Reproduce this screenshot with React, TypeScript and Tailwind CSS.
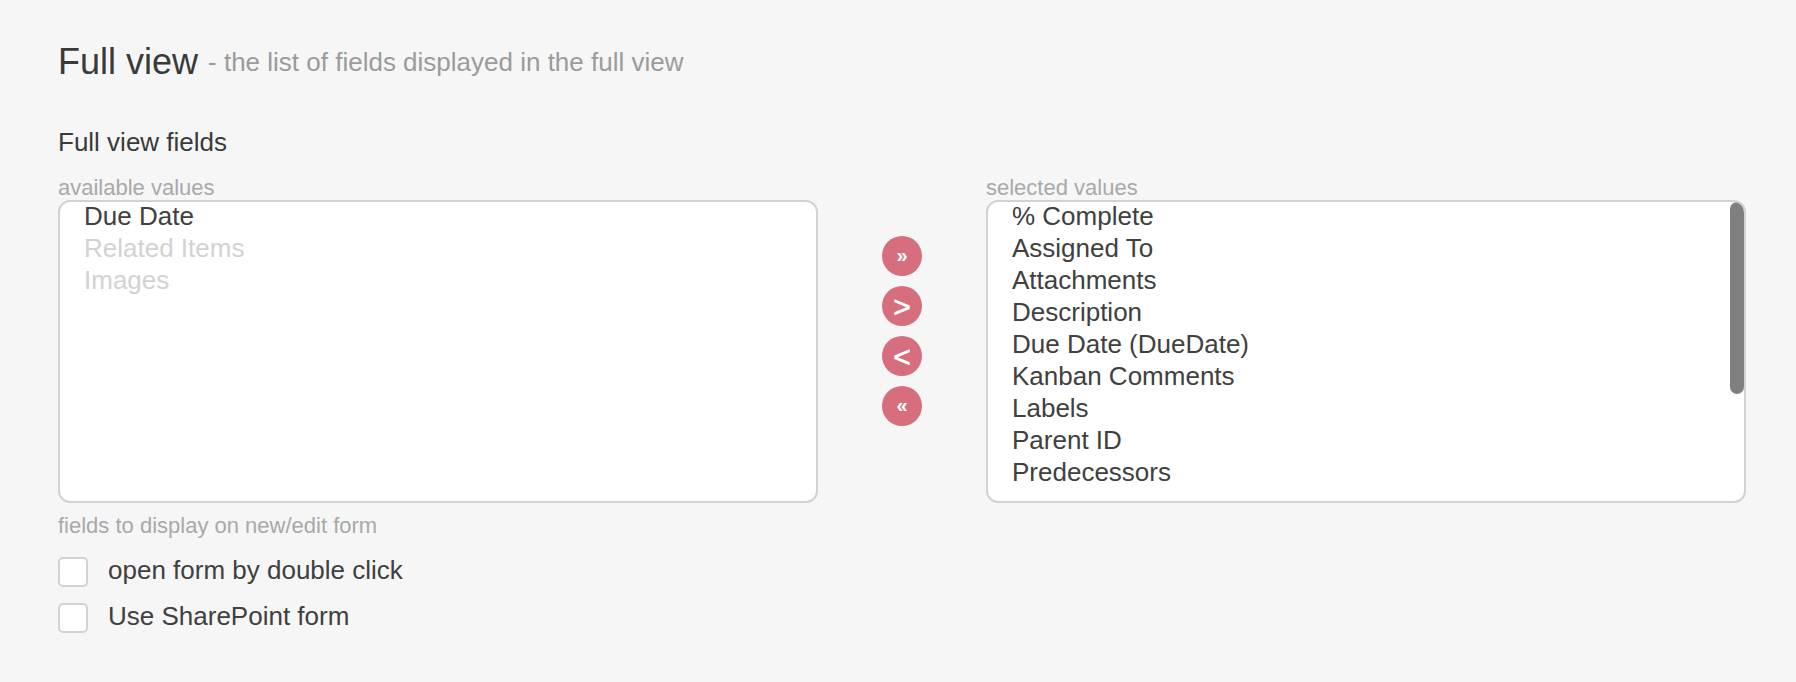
const font = "font-['Liberation_Sans',Arial,sans-serif]";

function ListBox({ items, scroll }: { items: { text: string; off?: boolean }[]; scroll?: boolean }) {
  return (
    <div className="relative h-[303px] overflow-hidden rounded-[12px] border-2 border-[#d2d2d2] bg-white pl-[24px]">
      {items.map((it) => (
        <div key={it.text} className={`h-[32px] text-[26px] leading-[29px] ${it.off ? "text-[#d2d2d2]" : "text-[#404040]"}`}>
          {it.text}
        </div>
      ))}
      {scroll && <div className="absolute right-0 top-0 h-[192px] w-[14px] rounded-[7px] bg-[#808080]" />}
    </div>
  );
}

function RoundButton({ label, big }: { label: string; big?: boolean }) {
  return (
    <div className={`flex h-[40px] w-[40px] items-center justify-center rounded-full bg-[#d66e7e] text-white ${big ? "text-[30px] leading-none pt-[1px] [-webkit-text-stroke:0.6px_white]" : "text-[20px] leading-none font-bold pb-[2px]"}`}>
      {label}
    </div>
  );
}

function Check({ label }: { label: string }) {
  return (
    <div className="flex h-[30px] items-center">
      <div className="h-[30px] w-[30px] rounded-[5px] border-2 border-[#d2d2d2] bg-white" />
      <span className="ml-[20px] pb-[4px] text-[26px] leading-[30px] text-[#404040]">{label}</span>
    </div>
  );
}

export default function App() {
  return (
    <div className={`${font} h-[682px] overflow-hidden bg-[#f6f6f6] pl-[58px] pt-[41px]`}>
      <div className="flex h-[42px] items-center">
        <span className="text-[36px] leading-[42px] text-[#3a3a3a]">Full view</span>
        <span className="ml-[10px] text-[26px] leading-[42px] text-[#9b9b9b]">- the list of fields displayed in the full view</span>
      </div>
      <div className="mt-[44px] h-[30px] text-[26px] leading-[30px] text-[#3a3a3a]">Full view fields</div>
      <div className="mt-[19px] flex">
        <div className="w-[760px]">
          <div className="h-[24px] text-[22px] leading-[24px] text-[#a9a9a9]">available values</div>
          <ListBox items={[{ text: "Due Date" }, { text: "Related Items", off: true }, { text: "Images", off: true }]} />
        </div>
        <div className="flex w-[168px] flex-col items-center gap-[10px] pt-[60px]">
          <RoundButton label="»" />
          <RoundButton label=">" big />
          <RoundButton label="<" big />
          <RoundButton label="«" />
        </div>
        <div className="w-[760px]">
          <div className="h-[24px] text-[22px] leading-[24px] text-[#a9a9a9]">selected values</div>
          <ListBox
            scroll
            items={[
              { text: "% Complete" },
              { text: "Assigned To" },
              { text: "Attachments" },
              { text: "Description" },
              { text: "Due Date (DueDate)" },
              { text: "Kanban Comments" },
              { text: "Labels" },
              { text: "Parent ID" },
              { text: "Predecessors" },
            ]}
          />
        </div>
      </div>
      <div className="mt-[10px] h-[26px] text-[22px] leading-[26px] text-[#a9a9a9]">fields to display on new/edit form</div>
      <div className="mt-[18px] flex flex-col gap-[16px]">
        <Check label="open form by double click" />
        <Check label="Use SharePoint form" />
      </div>
    </div>
  );
}
